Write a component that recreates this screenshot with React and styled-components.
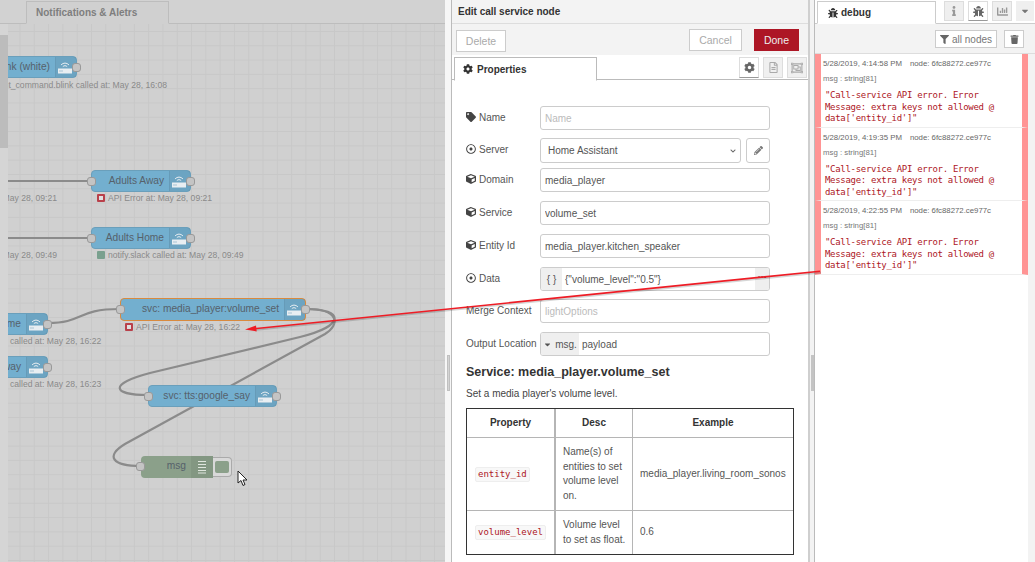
import React from "react";
import styled, { createGlobalStyle } from "styled-components";
import {
  FaCog, FaTag, FaRegDotCircle, FaCube, FaPencilAlt, FaBug, FaInfo, FaChartBar,
  FaCaretDown, FaChevronDown, FaFilter, FaTrash, FaRegFileAlt, FaRegObjectGroup,
} from "react-icons/fa";

// canvas origin in page coordinates, node data below is given in page coordinates
const OX = 8;
const OY = 24;

const nodes = [
  { label: "Blink (white)", x: -30, y: 56, w: 107 },
  { label: "Adults Away", x: 91, y: 170, w: 100 },
  { label: "Adults Home", x: 91, y: 227, w: 100 },
  { label: "svc: media_player:volume_set", x: 120, y: 298, w: 186, selected: true },
  { label: "Home", x: -30, y: 313, w: 78 },
  { label: "Away", x: -30, y: 356, w: 78 },
  { label: "svc: tts:google_say", x: 148, y: 385, w: 129 },
];

// end: text is anchored by its right edge because the canvas cuts off the start
const statuses = [
  { text: "light_command.blink called at: May 28, 16:08", end: 167, y: 78 },
  { text: "May 28, 09:21", end: 57, y: 191 },
  { text: "API Error at: May 28, 09:21", x: 108, y: 191, dot: "error" },
  { text: "May 28, 09:49", end: 57, y: 248 },
  { text: "notify.slack called at: May 28, 09:49", x: 108, y: 248, dot: "ok" },
  { text: "API Error at: May 28, 16:22", x: 136, y: 320, dot: "error" },
  { text: "called at: May 28, 16:22", x: 10, y: 334 },
  { text: "called at: May 28, 16:23", x: 10, y: 377 },
];

const formRows = [
  { label: "Name", Icon: FaTag, gap: 8, placeholder: "Name" },
  { label: "Server", Icon: FaRegDotCircle, gap: 6, select: true },
  { label: "Domain", Icon: FaCube, gap: 9, value: "media_player" },
  { label: "Service", Icon: FaCube, gap: 9, value: "volume_set" },
  { label: "Entity Id", Icon: FaCube, gap: 9, value: "media_player.kitchen_speaker" },
  { label: "Data", Icon: FaRegDotCircle, gap: 8, typed: "{ }", value: '{"volume_level":"0.5"}', more: true },
  { label: "Merge Context", gap: 9, placeholder: "lightOptions" },
  { label: "Output Location", gap: 0, typed: "msg.", caret: true, value: "payload" },
];

const debugMessages = [
  { time: "5/28/2019, 4:14:58 PM" },
  { time: "5/28/2019, 4:19:35 PM" },
  { time: "5/28/2019, 4:22:55 PM" },
];

const RouterIcon = () => (
  <svg width="14" height="13" viewBox="0 0 14 13">
    <path d="M3 4 C5.5 1.5 8.5 1.5 11 4" fill="none" stroke="#e8eef2" strokeWidth="1" />
    <path d="M4.8 5.6 C6.2 4.4 7.8 4.4 9.2 5.6" fill="none" stroke="#e8eef2" strokeWidth="1" />
    <rect x="0" y="7.5" width="14" height="5" fill="#e8eef2" />
    <rect x="1.5" y="9.5" width="1" height="1" fill="#6a9cb8" />
    <rect x="3.5" y="9.5" width="1" height="1" fill="#6a9cb8" />
  </svg>
);

const Node = ({ label, x, y, w, selected }) => (
  <NodeBox $x={x} $y={y} $w={w} $selected={selected}>
    <PortLeft />
    <NodeLabel>{label}</NodeLabel>
    <NodeIcon>
      <RouterIcon />
    </NodeIcon>
    <PortRight />
  </NodeBox>
);

const App = () => {
  return (
    <Page>
      <GlobalStyle />
      <EditorArea>
        <WorkspaceTabs>
          <WorkspaceTab>Notifications &amp; Aletrs</WorkspaceTab>
        </WorkspaceTabs>
        <WorkspaceRow>
          <PaletteStrip>
            <PaletteThumb />
          </PaletteStrip>
          <Workspace>
            <Wires viewBox={`${OX} ${OY} 437 538`}>
              <path d="M8 181 H91" />
              <path d="M8 238 H91" />
              <path d="M48 323 C84 323 76 309 120 309" />
              <path d="M306 309 C345 309 345 326 300 337 L150 373 C108 384 112 395 148 395" />
              <path d="M306 309 C340 309 340 325 325 334 L125 444 C105 456 112 466 141 466" />
            </Wires>
            {nodes.map((n) => (
              <Node key={n.label} {...n} />
            ))}
            {statuses.map((s) => (
              <Status key={s.text + s.y} $x={s.x} $end={s.end} $y={s.y}>
                {s.dot && <StatusDot $kind={s.dot} />}
                {s.text}
              </Status>
            ))}
            <DebugNode>
              <PortLeft />
              <NodeLabel>msg</NodeLabel>
              <DebugIcon>
                <svg width="10" height="14" viewBox="0 0 10 14">
                  <path d="M1 1.5H9M1 4.5H9M1 7.5H9M1 10.5H9M1 13H9" stroke="#dfe5dd" strokeWidth="1.2" />
                </svg>
              </DebugIcon>
              <DebugToggle>
                <span />
              </DebugToggle>
            </DebugNode>
            <Cursor width="12" height="17" viewBox="0 0 12 17">
              <path d="M1 1 V13 L4 10.5 L6 15.5 L8 14.5 L6 10 H10 Z" fill="#fff" stroke="#222" strokeWidth="1" />
            </Cursor>
          </Workspace>
        </WorkspaceRow>
      </EditorArea>

      <Gutter>
        <Grip />
      </Gutter>

      <Tray>
        <TrayTitle>Edit call service node</TrayTitle>
        <TrayToolbar>
          <TrayButton $muted>Delete</TrayButton>
          <ToolbarSpacer />
          <TrayButton $muted $raised>Cancel</TrayButton>
          <DoneButton>Done</DoneButton>
        </TrayToolbar>
        <TrayTabs>
          <TrayTab>
            <FaCog size={10} />
            Properties
          </TrayTab>
          <TabIcons>
            <TabIcon $active>
              <FaCog size={11} />
            </TabIcon>
            <TabIcon>
              <FaRegFileAlt size={11} />
            </TabIcon>
            <TabIcon>
              <FaRegObjectGroup size={12} />
            </TabIcon>
          </TabIcons>
        </TrayTabs>
        <TrayBody>
          {formRows.map((r) => (
            <FormRow key={r.label} $gap={r.gap}>
              <FormLabel>
                {r.Icon && <r.Icon size={10} />}
                {r.label}
              </FormLabel>
              {r.select ? (
                <>
                  <SelectWrap>
                    <ServerSelect defaultValue="ha">
                      <option value="ha">Home Assistant</option>
                    </ServerSelect>
                    <FaChevronDown size={6} />
                  </SelectWrap>
                  <EditButton>
                    <FaPencilAlt size={9} />
                  </EditButton>
                </>
              ) : (
                <Field>
                  {r.typed && (
                    <TypeBadge $wide={r.caret}>
                      {r.caret && <FaCaretDown size={9} />}
                      {r.typed}
                    </TypeBadge>
                  )}
                  <FieldInput readOnly value={r.value || ""} placeholder={r.placeholder} $tight={!!r.typed} />
                  {r.more && <MoreBadge>...</MoreBadge>}
                </Field>
              )}
            </FormRow>
          ))}
          <ServiceTitle>Service: media_player.volume_set</ServiceTitle>
          <ServiceText>Set a media player's volume level.</ServiceText>
          <DocTable>
            <colgroup>
              <col width="89" />
              <col width="77" />
              <col />
            </colgroup>
            <thead>
              <tr>
                <th>Property</th>
                <th>Desc</th>
                <th>Example</th>
              </tr>
            </thead>
            <tbody>
              <tr>
                <td>
                  <Code>entity_id</Code>
                </td>
                <td>Name(s) of entities to set volume level on.</td>
                <td>media_player.living_room_sonos</td>
              </tr>
              <tr>
                <td>
                  <Code>volume_level</Code>
                </td>
                <td>Volume level to set as float.</td>
                <td>0.6</td>
              </tr>
            </tbody>
          </DocTable>
        </TrayBody>
      </Tray>

      <Gutter $dark>
        <Grip $dark />
      </Gutter>

      <Sidebar>
        <SideTabs>
          <SideTab>
            <FaBug size={10} />
            debug
          </SideTab>
          <SideIcon>
            <FaInfo size={10} />
          </SideIcon>
          <SideIcon $active>
            <FaBug size={11} />
          </SideIcon>
          <SideIcon>
            <FaChartBar size={11} />
          </SideIcon>
          <SideCaret>
            <FaCaretDown size={10} />
          </SideCaret>
        </SideTabs>
        <SideToolbar>
          <SideButton>
            <FaFilter size={9} />
            all nodes
          </SideButton>
          <SideButton>
            <FaTrash size={9} />
          </SideButton>
        </SideToolbar>
        <DebugBody>
          <DebugList>
            {debugMessages.map((m) => (
              <DebugMessage key={m.time}>
                <DebugMeta>
                  <span>{m.time}</span>
                  <span>node: 6fc88272.ce977c</span>
                </DebugMeta>
                <DebugTopic>msg : string[81]</DebugTopic>
                <DebugError>
                  "Call-service API error. Error Message: extra keys not allowed @ data['entity_id']"
                </DebugError>
              </DebugMessage>
            ))}
          </DebugList>
          <DebugScroll />
        </DebugBody>
      </Sidebar>

      <ArrowOverlay viewBox="0 0 1035 562">
        <path d="M821 272.5 L254 330" stroke="rgba(0,0,0,0.16)" strokeWidth="2" fill="none" />
        <path d="M820 271.2 L254 328.7" stroke="#ee1c25" strokeWidth="1.6" fill="none" />
        <path d="M245 329.6 L256 325.4 L256.7 331.4 Z" fill="#ee1c25" />
      </ArrowOverlay>
    </Page>
  );
};

export default App;

const GlobalStyle = createGlobalStyle`
  html, body {
    margin: 0;
    padding: 0;
    background: #fff;
  }
  * {
    box-sizing: border-box;
  }
`;

const Page = styled.div`
  position: relative;
  display: flex;
  width: 1035px;
  height: 562px;
  overflow: hidden;
  font-family: "Liberation Sans", Arial, sans-serif;
  color: #444;
`;

const EditorArea = styled.div`
  width: 445px;
  display: flex;
  flex-direction: column;
  background: #d0d0d0;
`;

const WorkspaceTabs = styled.div`
  height: 24px;
  padding: 1px 0 0 26px;
  background: #d2d2d2;
  border-bottom: 1px solid #bdbdbd;
  display: flex;
`;

const WorkspaceTab = styled.div`
  width: 143px;
  height: 23px;
  padding: 5px 0 0 9px;
  background: #d0d0d0;
  border: 1px solid #bdbdbd;
  border-bottom: 1px solid #d0d0d0;
  font-size: 10px;
  font-weight: bold;
  color: #7e7e7e;
`;

const WorkspaceRow = styled.div`
  flex: 1;
  display: flex;
  min-height: 0;
`;

const PaletteStrip = styled.div`
  width: 8px;
  background: #d5d5d5;
  padding-top: 11px;
`;

const PaletteThumb = styled.div`
  height: 113px;
  background: #bcbcbc;
`;

const Workspace = styled.div`
  position: relative;
  flex: 1;
  overflow: hidden;
  background-color: #d0d0d0;
  background-image:
    linear-gradient(#c8c8c8 1px, transparent 1px),
    linear-gradient(90deg, #c8c8c8 1px, transparent 1px);
  background-size: 14.3px 14.3px;
  background-position: 11.5px 7px;
`;

const Wires = styled.svg`
  position: absolute;
  left: 0;
  top: 0;
  width: 437px;
  height: 538px;
  fill: none;
  stroke: #8b8b8b;
  stroke-width: 2.2;
`;

const NodeBox = styled.div`
  position: absolute;
  left: ${(p) => p.$x - OX}px;
  top: ${(p) => p.$y - OY}px;
  width: ${(p) => p.$w}px;
  height: ${(p) => (p.$selected ? 23 : 22)}px;
  display: flex;
  background: #73afcf;
  border: ${(p) => (p.$selected ? "1.5px solid #d98a3e" : "1px solid #6a9fbb")};
  border-radius: 4px;
`;

const NodeLabel = styled.div`
  flex: 1;
  min-width: 0;
  padding-right: 5px;
  text-align: right;
  white-space: nowrap;
  font-size: 10.2px;
  line-height: 20px;
  color: #56616b;
`;

const NodeIcon = styled.div`
  width: 21px;
  display: flex;
  align-items: center;
  justify-content: center;
  padding-right: 2px;
  background: rgba(0, 0, 0, 0.06);
  border-left: 1px solid rgba(0, 0, 0, 0.05);
`;

const PortLeft = styled.span`
  position: absolute;
  left: -5px;
  top: 6px;
  width: 9px;
  height: 9px;
  background: #c4c4c4;
  border: 1px solid #999;
  border-radius: 3px;
`;

const PortRight = styled(PortLeft)`
  left: auto;
  right: -5px;
`;

const Status = styled.div`
  position: absolute;
  left: ${(p) => (p.$end !== undefined ? p.$end : p.$x) - OX}px;
  top: ${(p) => p.$y - OY + 1}px;
  transform: ${(p) => (p.$end !== undefined ? "translateX(-100%)" : "none")};
  height: 12px;
  display: flex;
  align-items: center;
  gap: 2px;
  white-space: nowrap;
  font-size: 8.6px;
  color: #8a8a8a;
`;

const StatusDot = styled.span`
  width: 8px;
  height: 8px;
  margin-left: -11px;
  margin-right: 1px;
  border-radius: 1px;
  background: ${(p) => (p.$kind === "error" ? "#e0e0e0" : "#79a08e")};
  border: 2px solid ${(p) => (p.$kind === "error" ? "#b9404a" : "#79a08e")};
`;

const DebugNode = styled.div`
  position: absolute;
  left: ${141 - OX}px;
  top: ${456 - OY}px;
  width: 72px;
  height: 22px;
  display: flex;
  background: #8ba08a;
  border-radius: 4px 0 0 4px;
`;

const DebugIcon = styled.div`
  width: 22px;
  display: flex;
  align-items: center;
  justify-content: center;
  background: rgba(0, 0, 0, 0.05);
`;

const DebugToggle = styled.div`
  position: absolute;
  left: 72px;
  top: 1px;
  width: 19px;
  height: 20px;
  padding: 3px 2px;
  background: #d9d9d9;
  border: 1px solid #aaa;
  border-left: none;
  border-radius: 0 4px 4px 0;
  display: flex;

  span {
    flex: 1;
    background: #8ba08a;
    border-radius: 2px;
  }
`;

const Cursor = styled.svg`
  position: absolute;
  left: ${237 - OX}px;
  top: ${470 - OY}px;
`;

const Gutter = styled.div`
  width: 7px;
  flex: none;
  display: flex;
  align-items: flex-start;
  justify-content: ${(p) => (p.$dark ? "center" : "flex-start")};
  padding: 355px 0 0 ${(p) => (p.$dark ? 0 : 2)}px;
  background: ${(p) => (p.$dark ? "#f3f3f3" : "#f6f6f6")};
  border-left: ${(p) => (p.$dark ? "2px solid #cfcfcf" : "none")};
  border-right: 1px solid #bbb;
`;

const Grip = styled.div`
  width: 3px;
  height: 36px;
  background: ${(p) => (p.$dark ? "#c4c4c4" : "#d4d4d4")};
  border: ${(p) => (p.$dark ? "none" : "1px solid #c0c0c0")};
`;

const Tray = styled.div`
  width: 356px;
  flex: none;
  display: flex;
  flex-direction: column;
  background: #fff;
  overflow: hidden;
`;

const TrayTitle = styled.div`
  height: 24px;
  padding: 6px 0 0 6px;
  background: #f3f3f3;
  border-bottom: 1px solid #ddd;
  font-size: 10px;
  font-weight: bold;
  color: #333;
`;

const TrayToolbar = styled.div`
  height: 31px;
  padding: 5px 9px 4px 4px;
  display: flex;
  gap: 12px;
  background: #f3f3f3;
`;

const ToolbarSpacer = styled.div`
  flex: 1;
  margin: 0 -12px;
`;

const TrayButton = styled.button`
  width: ${(p) => (p.$raised ? 53 : 50)}px;
  height: 22px;
  margin-top: ${(p) => (p.$raised ? 0 : 1)}px;
  padding: 0;
  background: #fff;
  border: 1px solid #ccc;
  border-radius: 0;
  font: 10.5px "Liberation Sans", Arial, sans-serif;
  color: ${(p) => (p.$muted ? "#aaa" : "#555")};
`;

const DoneButton = styled.button`
  width: 45px;
  height: 22px;
  padding: 0;
  background: #ad1625;
  border: 1px solid #ad1625;
  border-radius: 0;
  font: 10.5px "Liberation Sans", Arial, sans-serif;
  color: #eee;
`;

const TrayTabs = styled.div`
  height: 25px;
  padding: 2px 0 0 2px;
  display: flex;
  justify-content: space-between;
  background: #fff;
  border-bottom: 1px solid #bbb;
`;

const TrayTab = styled.div`
  width: 143px;
  height: 24px;
  padding: 0 0 0 8px;
  display: flex;
  align-items: center;
  gap: 4px;
  background: #fff;
  border: 1px solid #bbb;
  border-bottom: 1px solid #fff;
  font-size: 10px;
  font-weight: bold;
  color: #333;
`;

const TabIcons = styled.div`
  display: flex;
  gap: 4px;
  margin-right: 1px;
`;

const TabIcon = styled.div`
  width: 20px;
  height: 21px;
  display: flex;
  align-items: center;
  justify-content: center;
  background: ${(p) => (p.$active ? "#fff" : "#f0f0f0")};
  border: 1px solid #ddd;
  border-bottom: 1px solid ${(p) => (p.$active ? "#999" : "#ddd")};
  color: ${(p) => (p.$active ? "#666" : "#aaa")};
`;

const TrayBody = styled.div`
  flex: 1;
  padding: 26px 14px 0 14px;
  overflow: hidden;
`;

const FormRow = styled.div`
  display: flex;
  align-items: center;
  height: 24px;
  margin-bottom: ${(p) => p.$gap}px;
`;

const FormLabel = styled.div`
  width: 74px;
  flex: none;
  display: flex;
  align-items: center;
  gap: 3px;
  margin-top: -2px;
  font-size: 10px;
  white-space: nowrap;
  color: #555;

  svg {
    color: #444;
  }
`;

const Field = styled.div`
  width: 230px;
  height: 24px;
  display: flex;
  background: #fff;
  border: 1px solid #ccc;
  border-radius: 3px;
  overflow: hidden;
`;

const FieldInput = styled.input`
  flex: 1;
  min-width: 0;
  padding: 0 0 0 ${(p) => (p.$tight ? 3 : 4)}px;
  border: none;
  outline: none;
  background: transparent;
  font: 10px "Liberation Sans", Arial, sans-serif;
  color: #555;

  &::placeholder {
    color: #bbb;
  }
`;

const TypeBadge = styled.div`
  flex: none;
  width: ${(p) => (p.$wide ? 38 : 21)}px;
  display: flex;
  align-items: center;
  justify-content: center;
  gap: 3px;
  background: #efefef;
  font-size: 10px;
  color: #555;
`;

const MoreBadge = styled.div`
  width: 14px;
  background: #efefef;
  font-size: 11px;
  font-weight: bold;
  text-align: center;
  color: #444;
`;

const SelectWrap = styled.div`
  position: relative;
  width: 201px;
  height: 25px;
  margin-right: 5px;

  svg {
    position: absolute;
    right: 5px;
    top: 10px;
    color: #666;
    pointer-events: none;
  }
`;

const ServerSelect = styled.select`
  width: 100%;
  height: 100%;
  padding: 0 0 0 7px;
  appearance: none;
  background: #fff;
  border: 1px solid #ccc;
  border-radius: 3px;
  font: 10px "Liberation Sans", Arial, sans-serif;
  color: #555;
`;

const EditButton = styled.div`
  width: 24px;
  height: 25px;
  display: flex;
  align-items: center;
  justify-content: center;
  background: #fff;
  border: 1px solid #ccc;
  border-radius: 3px;
  color: #777;
`;

const ServiceTitle = styled.div`
  margin-top: 9px;
  font-size: 12.5px;
  font-weight: bold;
  color: #333;
`;

const ServiceText = styled.div`
  margin-top: 9px;
  font-size: 10px;
  color: #444;
`;

const DocTable = styled.table`
  width: 328px;
  margin-top: 9px;
  border-collapse: separate;
  border-spacing: 0;
  table-layout: fixed;
  border: 1px solid #333;
  font-size: 10px;
  line-height: 14.5px;
  color: #555;

  th {
    height: 29px;
    padding: 0;
    border-right: 1px solid #b5b5b5;
    border-bottom: 1px solid #b5b5b5;
    font-weight: bold;
    color: #333;
  }

  td {
    padding: 0 5px 0 7px;
    border-right: 1px solid #b5b5b5;
    vertical-align: middle;
  }

  td:nth-child(3) {
    padding-right: 0;
  }

  tr:nth-child(1) td {
    height: 73px;
    border-bottom: 1px solid #b5b5b5;
  }

  tr:nth-child(2) td {
    height: 43px;
    border-bottom: none;
  }

  th:nth-child(1),
  td:nth-child(1) {
    border-right-width: 2px;
  }

  th:last-child,
  td:last-child {
    border-right: none;
  }
`;

const Code = styled.code`
  display: inline-block;
  padding: 1px 2px 2px 2px;
  margin-left: 1px;
  background: #f8f8f8;
  border: 1px solid #eee;
  border-radius: 2px;
  font: 9px "DejaVu Sans Mono", "Liberation Mono", monospace;
  color: #ad1625;
`;

const Sidebar = styled.div`
  flex: 1;
  display: flex;
  flex-direction: column;
  min-width: 0;
  background: #fff;
`;

const SideTabs = styled.div`
  height: 24px;
  padding: 1px 0 0 2px;
  display: flex;
  gap: 4px;
  background: #fff;
  border-bottom: 1px solid #ccc;
`;

const SideTab = styled.div`
  width: 119px;
  height: 23px;
  margin-right: 4px;
  padding-left: 10px;
  display: flex;
  align-items: center;
  gap: 3px;
  background: #fff;
  border: 1px solid #ccc;
  border-bottom: 1px solid #fff;
  font-size: 10px;
  font-weight: bold;
  color: #333;
`;

const SideIcon = styled.div`
  width: 20px;
  height: 20px;
  display: flex;
  align-items: center;
  justify-content: center;
  background: ${(p) => (p.$active ? "#fff" : "#efefef")};
  border: 1px solid #ddd;
  border-bottom: 1px solid ${(p) => (p.$active ? "#999" : "#ddd")};
  color: ${(p) => (p.$active ? "#666" : "#999")};
`;

const SideCaret = styled(SideIcon)`
  width: 18px;
  border: none;
  color: #777;
`;

const SideToolbar = styled.div`
  height: 30px;
  padding: 6px 11px 0 0;
  display: flex;
  justify-content: flex-end;
  gap: 7px;
  background: #f3f3f3;
  border-bottom: 1px solid #ddd;
`;

const SideButton = styled.div`
  height: 18px;
  min-width: 20px;
  padding: 0 4px;
  display: flex;
  align-items: center;
  justify-content: center;
  gap: 3px;
  background: #fff;
  border: 1px solid #ccc;
  font-size: 10px;
  color: #777;

  svg {
    color: #666;
  }
`;

const DebugBody = styled.div`
  flex: 1;
  display: flex;
  min-height: 0;
`;

const DebugList = styled.div`
  flex: 1;
`;

const DebugScroll = styled.div`
  width: 7px;
  background: #f3f3f3;
`;

const DebugMessage = styled.div`
  height: 73.5px;
  padding: 4px 4px 0 2px;
  background: #fff;
  border-left: 6px solid #ff9494;
  border-right: 6px solid #ff9494;
  border-bottom: 1px solid #eee;
`;

const DebugMeta = styled.div`
  display: flex;
  gap: 8px;
  font-size: 7.8px;
  line-height: 12px;
  color: #666;
  white-space: nowrap;
`;

const DebugTopic = styled.div`
  margin-top: 3px;
  font-size: 7.8px;
  line-height: 12px;
  color: #777;
`;

const DebugError = styled.div`
  margin-top: 5px;
  padding-left: 2px;
  font: 9px/11.5px "DejaVu Sans Mono", "Liberation Mono", monospace;
  letter-spacing: -0.3px;
  color: #ad1625;
`;

const ArrowOverlay = styled.svg`
  position: absolute;
  left: 0;
  top: 0;
  width: 1035px;
  height: 562px;
  pointer-events: none;
`;
